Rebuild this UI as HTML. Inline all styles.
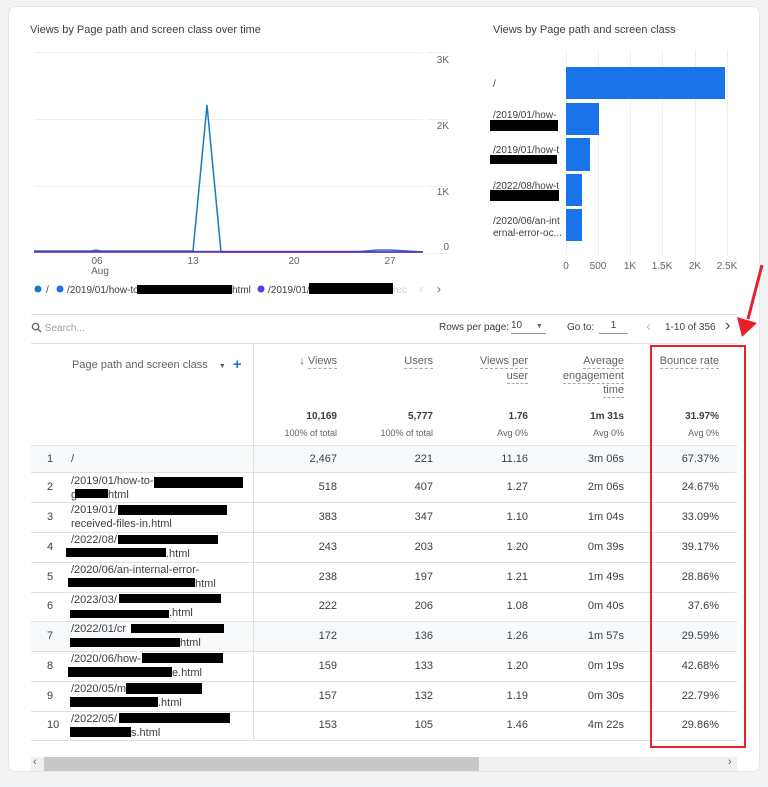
<!DOCTYPE html>
<html><head><meta charset="utf-8"><style>
*{margin:0;padding:0;box-sizing:border-box}
body{width:768px;height:787px;background:#f1f3f4;font-family:"Liberation Sans",sans-serif;color:#3c4043;position:relative;overflow:hidden}
.card{position:absolute;left:8px;top:6px;width:752px;height:766px;background:#fff;border:1px solid #e3e5e8;border-radius:7px}
.a{position:absolute;white-space:nowrap}
.t{font-size:11px;color:#3c4043}
.s{font-size:10px;color:#5f6368}
.hl{position:absolute;height:1px;background:#e0e0e0}
.blk{position:absolute;background:#000}
.r{position:absolute;text-align:right;font-size:11px;color:#3c4043}
.c{position:absolute;font-size:11px;color:#3c4043;white-space:nowrap}
.dash{border-bottom:1px dashed #aaa;padding-bottom:1px}
</style></head><body>
<div class="card"></div>
<div class="a t" style="left:30px;top:24px">Views by Page path and screen class over time</div>
<div class="a t" style="left:493px;top:24px">Views by Page path and screen class</div>

<svg class="a" style="left:0;top:0" width="768" height="300">
<g stroke="#eceff1" stroke-width="1">
<line x1="34" y1="52.5" x2="423" y2="52.5"/><line x1="426" y1="52.5" x2="448" y2="52.5"/>
<line x1="34" y1="119.5" x2="423" y2="119.5"/><line x1="426" y1="119.5" x2="448" y2="119.5"/>
<line x1="34" y1="186.5" x2="423" y2="186.5"/><line x1="426" y1="186.5" x2="448" y2="186.5"/>
<line x1="426" y1="253.5" x2="448" y2="253.5"/>
</g>
<g font-family="Liberation Sans" font-size="10" fill="#5f6368" text-anchor="end">
<text x="449" y="63">3K</text><text x="449" y="129">2K</text><text x="449" y="195">1K</text><text x="449" y="250">0</text>
</g>
<polyline points="34,251 193,251 207,105 221,252 423,252" fill="none" stroke="#1a7abf" stroke-width="1.5"/>
<polyline points="34,251.5 90,251.5 96,250 102,251.5 360,251.5 378,250 390,250 423,252" fill="none" stroke="#1a73e8" stroke-width="1.5"/>
<polyline points="34,252 423,252" fill="none" stroke="#7b1fa2" stroke-width="1.5"/>
<g font-family="Liberation Sans" font-size="10" fill="#5f6368" text-anchor="middle">
<text x="97" y="264">06</text><text x="100" y="274">Aug</text><text x="193" y="264">13</text><text x="294" y="264">20</text><text x="390" y="264">27</text>
</g>
<circle cx="38" cy="289" r="3.5" fill="#1a7abf"/>
<circle cx="60" cy="289" r="3.5" fill="#1a73e8"/>
<circle cx="261" cy="289" r="3.5" fill="#4c3df0"/>
<g font-family="Liberation Sans" font-size="10" fill="#3c4043">
<text x="46" y="293">/</text><text x="67" y="293">/2019/01/how-to-</text><text x="232" y="293">html</text><text x="268" y="293">/2019/01/</text>
<text x="393" y="293" fill="#ccc">rec</text>
</g>
<rect x="137" y="285" width="95" height="9" fill="#000"/>
<rect x="309" y="283" width="84" height="11" fill="#000"/>
<text x="419" y="293" font-size="12" fill="#ccc" font-family="Liberation Sans">‹</text>
<text x="437" y="293" font-size="12" fill="#5f6368" font-family="Liberation Sans">›</text>
<g stroke="#eceff1"><line x1="566.5" y1="50" x2="566.5" y2="256"/><line x1="598.5" y1="50" x2="598.5" y2="256"/><line x1="630.5" y1="50" x2="630.5" y2="256"/><line x1="662.5" y1="50" x2="662.5" y2="256"/><line x1="695.5" y1="50" x2="695.5" y2="256"/><line x1="727.5" y1="50" x2="727.5" y2="256"/></g>
<g fill="#1a73e8">
<rect x="566" y="67" width="159" height="32"/><rect x="566" y="103" width="33" height="32"/><rect x="566" y="138" width="24" height="33"/><rect x="566" y="174" width="16" height="32"/><rect x="566" y="209" width="16" height="32"/>
</g>
<g font-family="Liberation Sans" font-size="10" fill="#5f6368" text-anchor="middle">
<text x="566" y="269">0</text><text x="598" y="269">500</text><text x="630" y="269">1K</text><text x="662" y="269">1.5K</text><text x="695" y="269">2K</text><text x="727" y="269">2.5K</text>
</g>
<g font-family="Liberation Sans" font-size="10" fill="#3c4043">
<text x="493" y="87">/</text><text x="493" y="118">/2019/01/how-</text><text x="493" y="153">/2019/01/how-t</text><text x="493" y="189">/2022/08/how-t</text><text x="493" y="224">/2020/06/an-int</text><text x="493" y="236">ernal-error-oc...</text>
</g>
<rect x="490" y="120" width="68" height="11" fill="#000"/>
<rect x="490" y="155" width="67" height="9" fill="#000"/>
<rect x="490" y="190" width="69" height="11" fill="#000"/>
</svg>

<div class="hl" style="left:31px;top:314px;width:706px"></div>
<div class="a s" style="left:31px;top:322px;color:#9aa0a6"><svg width="11" height="11" viewBox="0 0 12 12" style="vertical-align:-2px"><circle cx="5" cy="5" r="3.5" fill="none" stroke="#5f6368" stroke-width="1.4"/><line x1="7.5" y1="7.5" x2="11" y2="11" stroke="#5f6368" stroke-width="1.4"/></svg> Search...</div>
<div class="a s" style="left:439px;top:322px;color:#3c4043">Rows per page:</div>
<div class="a s" style="left:511px;top:320px;color:#3c4043;width:35px;border-bottom:1px solid #999;padding-bottom:2px">10 <span style="font-size:7px;margin-left:11px;color:#5f6368">▼</span></div>
<div class="a s" style="left:567px;top:322px;color:#3c4043">Go to:</div>
<div class="a s" style="left:599px;top:320px;color:#3c4043;width:29px;text-align:center;border-bottom:1px solid #999;padding-bottom:2px">1</div>
<div class="a" style="left:646px;top:318px;font-size:15px;color:#c0c0c0">‹</div>
<div class="a s" style="left:665px;top:322px;color:#3c4043">1-10 of 356</div>
<div class="a" style="left:725px;top:317px;font-size:16px;color:#3c4043">›</div>
<div class="hl" style="left:31px;top:343px;width:706px"></div>

<div class="a" style="left:31px;top:445px;width:706px;height:27px;background:#f8f9fa"></div>
<div class="a" style="left:31px;top:621px;width:706px;height:30px;background:#f8f9fa"></div>
<div class="a" style="left:253px;top:343px;width:1px;height:398px;background:#e0e0e0"></div>
<div class="a s" style="left:72px;top:356px;font-size:11px;color:#5f6368">Page path and screen class <span style="font-size:7px;margin-left:8px">▼</span> <span style="color:#1a73e8;font-size:15px;font-weight:bold;margin-left:4px;vertical-align:-1px">+</span></div>
<div class="r" style="left:257px;top:354px;width:80px;color:#5f6368;line-height:15px">↓ <span class="dash">Views</span></div>
<div class="r" style="left:353px;top:354px;width:80px;color:#5f6368;line-height:15px"><span class="dash">Users</span></div>
<div class="r" style="left:448px;top:354px;width:80px;color:#5f6368;line-height:15px"><span class="dash">Views per</span><br><span class="dash">user</span></div>
<div class="r" style="left:544px;top:354px;width:80px;color:#5f6368;line-height:14.5px"><span class="dash">Average</span><br><span class="dash">engagement</span><br><span class="dash">time</span></div>
<div class="r" style="left:639px;top:354px;width:80px;color:#5f6368;line-height:15px"><span class="dash">Bounce rate</span></div>

<div class="r" style="left:257px;top:411px;width:80px;font-weight:bold;font-size:10px">10,169</div>
<div class="r" style="left:353px;top:411px;width:80px;font-weight:bold;font-size:10px">5,777</div>
<div class="r" style="left:448px;top:411px;width:80px;font-weight:bold;font-size:10px">1.76</div>
<div class="r" style="left:544px;top:411px;width:80px;font-weight:bold;font-size:10px">1m 31s</div>
<div class="r" style="left:639px;top:411px;width:80px;font-weight:bold;font-size:10px">31.97%</div>
<div class="r" style="left:237px;top:428px;width:100px;font-size:9px;color:#5f6368">100% of total</div>
<div class="r" style="left:333px;top:428px;width:100px;font-size:9px;color:#5f6368">100% of total</div>
<div class="r" style="left:448px;top:428px;width:80px;font-size:9px;color:#5f6368">Avg 0%</div>
<div class="r" style="left:544px;top:428px;width:80px;font-size:9px;color:#5f6368">Avg 0%</div>
<div class="r" style="left:639px;top:428px;width:80px;font-size:9px;color:#5f6368">Avg 0%</div>

<div class="hl" style="left:31px;top:445px;width:706px"></div>
<div class="hl" style="left:31px;top:472px;width:706px"></div>
<div class="hl" style="left:31px;top:502px;width:706px"></div>
<div class="hl" style="left:31px;top:532px;width:706px"></div>
<div class="hl" style="left:31px;top:562px;width:706px"></div>
<div class="hl" style="left:31px;top:592px;width:706px"></div>
<div class="hl" style="left:31px;top:621px;width:706px"></div>
<div class="hl" style="left:31px;top:651px;width:706px"></div>
<div class="hl" style="left:31px;top:681px;width:706px"></div>
<div class="hl" style="left:31px;top:711px;width:706px"></div>
<div class="hl" style="left:31px;top:740px;width:706px"></div>

<div class="c" style="left:47px;top:453px">1</div><div class="c" style="left:71px;top:453px">/</div>
<div class="c" style="left:47px;top:481px">2</div><div class="c" style="left:71px;top:475px">/2019/01/how-to-</div><div class="c" style="left:71px;top:489px">g</div><div class="c" style="left:108px;top:489px">html</div>
<div class="c" style="left:47px;top:511px">3</div><div class="c" style="left:71px;top:504px">/2019/01/</div><div class="c" style="left:71px;top:518px">received-files-in.html</div>
<div class="c" style="left:47px;top:541px">4</div><div class="c" style="left:71px;top:534px">/2022/08/</div><div class="c" style="left:166px;top:548px">.html</div>
<div class="c" style="left:47px;top:571px">5</div><div class="c" style="left:71px;top:564px">/2020/06/an-internal-error-</div><div class="c" style="left:195px;top:578px">html</div>
<div class="c" style="left:47px;top:600px">6</div><div class="c" style="left:71px;top:594px">/2023/03/</div><div class="c" style="left:169px;top:607px">.html</div>
<div class="c" style="left:47px;top:630px">7</div><div class="c" style="left:71px;top:623px">/2022/01/cr</div><div class="c" style="left:180px;top:637px">html</div>
<div class="c" style="left:47px;top:660px">8</div><div class="c" style="left:71px;top:653px">/2020/06/how-</div><div class="c" style="left:172px;top:667px">e.html</div>
<div class="c" style="left:47px;top:690px">9</div><div class="c" style="left:71px;top:683px">/2020/05/m</div><div class="c" style="left:158px;top:697px">.html</div>
<div class="c" style="left:47px;top:719px">10</div><div class="c" style="left:71px;top:713px">/2022/05/</div><div class="c" style="left:131px;top:727px">s.html</div>

<div class="blk" style="left:154px;top:477px;width:89px;height:11px"></div>
<div class="blk" style="left:75px;top:489px;width:33px;height:9px"></div>
<div class="blk" style="left:118px;top:505px;width:109px;height:10px"></div>
<div class="blk" style="left:118px;top:535px;width:100px;height:9px"></div>
<div class="blk" style="left:66px;top:548px;width:100px;height:9px"></div>
<div class="blk" style="left:68px;top:578px;width:127px;height:9px"></div>
<div class="blk" style="left:119px;top:594px;width:102px;height:9px"></div>
<div class="blk" style="left:70px;top:610px;width:99px;height:8px"></div>
<div class="blk" style="left:131px;top:624px;width:93px;height:9px"></div>
<div class="blk" style="left:70px;top:638px;width:110px;height:9px"></div>
<div class="blk" style="left:142px;top:653px;width:81px;height:10px"></div>
<div class="blk" style="left:68px;top:667px;width:104px;height:10px"></div>
<div class="blk" style="left:126px;top:683px;width:76px;height:11px"></div>
<div class="blk" style="left:70px;top:697px;width:88px;height:10px"></div>
<div class="blk" style="left:119px;top:713px;width:111px;height:10px"></div>
<div class="blk" style="left:70px;top:727px;width:61px;height:10px"></div>

<div class="r" style="left:257px;top:453px;width:80px">2,467</div><div class="r" style="left:353px;top:453px;width:80px">221</div><div class="r" style="left:448px;top:453px;width:80px">11.16</div><div class="r" style="left:544px;top:453px;width:80px">3m 06s</div><div class="r" style="left:639px;top:453px;width:80px">67.37%</div>
<div class="r" style="left:257px;top:481px;width:80px">518</div><div class="r" style="left:353px;top:481px;width:80px">407</div><div class="r" style="left:448px;top:481px;width:80px">1.27</div><div class="r" style="left:544px;top:481px;width:80px">2m 06s</div><div class="r" style="left:639px;top:481px;width:80px">24.67%</div>
<div class="r" style="left:257px;top:511px;width:80px">383</div><div class="r" style="left:353px;top:511px;width:80px">347</div><div class="r" style="left:448px;top:511px;width:80px">1.10</div><div class="r" style="left:544px;top:511px;width:80px">1m 04s</div><div class="r" style="left:639px;top:511px;width:80px">33.09%</div>
<div class="r" style="left:257px;top:541px;width:80px">243</div><div class="r" style="left:353px;top:541px;width:80px">203</div><div class="r" style="left:448px;top:541px;width:80px">1.20</div><div class="r" style="left:544px;top:541px;width:80px">0m 39s</div><div class="r" style="left:639px;top:541px;width:80px">39.17%</div>
<div class="r" style="left:257px;top:571px;width:80px">238</div><div class="r" style="left:353px;top:571px;width:80px">197</div><div class="r" style="left:448px;top:571px;width:80px">1.21</div><div class="r" style="left:544px;top:571px;width:80px">1m 49s</div><div class="r" style="left:639px;top:571px;width:80px">28.86%</div>
<div class="r" style="left:257px;top:600px;width:80px">222</div><div class="r" style="left:353px;top:600px;width:80px">206</div><div class="r" style="left:448px;top:600px;width:80px">1.08</div><div class="r" style="left:544px;top:600px;width:80px">0m 40s</div><div class="r" style="left:639px;top:600px;width:80px">37.6%</div>
<div class="r" style="left:257px;top:630px;width:80px">172</div><div class="r" style="left:353px;top:630px;width:80px">136</div><div class="r" style="left:448px;top:630px;width:80px">1.26</div><div class="r" style="left:544px;top:630px;width:80px">1m 57s</div><div class="r" style="left:639px;top:630px;width:80px">29.59%</div>
<div class="r" style="left:257px;top:660px;width:80px">159</div><div class="r" style="left:353px;top:660px;width:80px">133</div><div class="r" style="left:448px;top:660px;width:80px">1.20</div><div class="r" style="left:544px;top:660px;width:80px">0m 19s</div><div class="r" style="left:639px;top:660px;width:80px">42.68%</div>
<div class="r" style="left:257px;top:690px;width:80px">157</div><div class="r" style="left:353px;top:690px;width:80px">132</div><div class="r" style="left:448px;top:690px;width:80px">1.19</div><div class="r" style="left:544px;top:690px;width:80px">0m 30s</div><div class="r" style="left:639px;top:690px;width:80px">22.79%</div>
<div class="r" style="left:257px;top:719px;width:80px">153</div><div class="r" style="left:353px;top:719px;width:80px">105</div><div class="r" style="left:448px;top:719px;width:80px">1.46</div><div class="r" style="left:544px;top:719px;width:80px">4m 22s</div><div class="r" style="left:639px;top:719px;width:80px">29.86%</div>

<div class="a" style="left:31px;top:757px;width:706px;height:14px;background:#f1f1f1"></div>
<div class="a" style="left:44px;top:757px;width:435px;height:14px;background:#c8c8c8"></div>
<div class="a" style="left:33px;top:756px;font-size:11px;color:#666">‹</div>
<div class="a" style="left:728px;top:756px;font-size:11px;color:#666">›</div>

<div class="a" style="left:650px;top:345px;width:96px;height:403px;border:2.5px solid #e8202a"></div>
<svg class="a" style="left:720px;top:255px" width="48" height="90">
<line x1="42" y1="10" x2="28" y2="64" stroke="#e8202a" stroke-width="3"/>
<polygon points="17,62 37,68 22,82" fill="#e8202a"/>
</svg>
</body></html>
